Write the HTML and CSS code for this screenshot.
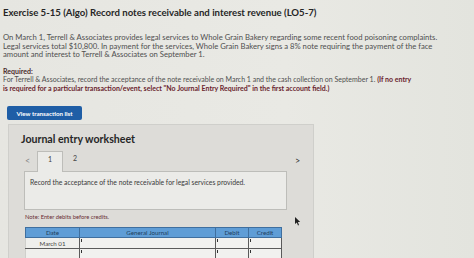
FILE: index.html
```html
<!DOCTYPE html>
<html>
<head>
    <meta charset="utf-8" />
    <title>Exercise 5-15</title>
    <link rel="stylesheet" href="styles.css">
</head>
<body>
    <div id="lap">
        <h1 id="cim">Exercise 5-15 (Algo) Record notes receivable and interest revenue (LO5-7)</h1>
        <p id="leiras">
            On March 1, Terrell &amp; Associates provides legal services to Whole Grain Bakery regarding some recent food poisoning complaints.<br>
            Legal services total $10,800. In payment for the services, Whole Grain Bakery signs a 8% note requiring the payment of the face<br>
            amount and interest to Terrell &amp; Associates on September 1.
        </p>
        <div id="feladat">
            <div class="cimke">Required:</div>
            For Terrell &amp; Associates, record the acceptance of the note receivable on March 1 and the cash collection on September 1. <b class="piros">(If no entry<br>
            is required for a particular transaction/event, select "No Journal Entry Required" in the first account field.)</b>
        </div>
        <button id="gomb" type="button">View transaction list</button>
        <div id="munkalap">
            <h2>Journal entry worksheet</h2>
            <div id="fulek">
                <span class="nyil">&lt;</span>
                <span class="ful aktiv">1</span>
                <span class="ful">2</span>
                <span class="nyil jobb">&gt;</span>
            </div>
            <div id="doboz">Record the acceptance of the note receivable for legal services provided.</div>
            <div id="megjegyzes">Note: Enter debits before credits.</div>
            <table id="tabla">
                <tr>
                    <th class="datum">Date</th>
                    <th class="konyv">General Journal</th>
                    <th class="osszeg">Debit</th>
                    <th class="osszeg">Credit</th>
                </tr>
                <tr>
                    <td class="datum">March 01</td>
                    <td class="mezo"></td>
                    <td class="mezo"></td>
                    <td class="mezo"></td>
                </tr>
                <tr>
                    <td class="datum"></td>
                    <td class="mezo"></td>
                    <td class="mezo"></td>
                    <td class="mezo"></td>
                </tr>
            </table>
            <svg id="kurzor" width="6" height="9" viewBox="0 0 6 9"><path d="M0 0 L0 7 L1.8 5.4 L3 8.4 L4 8 L2.9 5.1 L5.2 5 Z" fill="#222"/></svg>
        </div>
    </div>
</body>
</html>
```

FILE: styles.css
```css
body {
    margin: 0;
    background-color: #e4e4df;
    font-family: Lato, "Liberation Sans", sans-serif;
    color: #4f4f4f;
    overflow: hidden;
}
#lap {
    box-sizing: border-box;
    padding: 6px 0 0 3px;
    height: 258px;
    overflow: hidden;
    background: linear-gradient(90deg, #e6e6e1 0%, #e9e9e4 60%, #e3e4de 100%);
}
#cim {
    margin: 0;
    font-size: 9.6px;
    line-height: 13px;
    font-weight: bold;
    color: #262626;
}
#leiras {
    margin: 14px 0 0 0;
    font-size: 7.7px;
    line-height: 8.5px;
}
#feladat {
    margin-top: 8px;
    font-size: 7px;
    line-height: 8.5px;
}
.cimke {
    font-weight: bold;
    color: #4a2c2c;
}
.piros {
    color: #6a1f2e;
}
#gomb {
    display: block;
    margin: 14px 0 0 4px;
    width: 75px;
    height: 14px;
    padding: 0;
    border: none;
    border-radius: 2px;
    background-color: #1f5ea6;
    color: #ffffff;
    font-family: Lato, "Liberation Sans", sans-serif;
    font-size: 6.2px;
    font-weight: bold;
}
#munkalap {
    position: relative;
    margin: 4px 0 0 5px;
    width: 286px;
    height: 140px;
    padding: 8px 8px 0 10px;
    background-color: #dddcd8;
    border: 1px solid #cfcfcb;
}
#munkalap h2 {
    margin: 0 0 0 2px;
    font-size: 10.6px;
    line-height: 13px;
    color: #262626;
}
#fulek {
    display: flex;
    align-items: flex-end;
    height: 21px;
    margin-top: 4px;
    font-size: 7px;
}
.nyil {
    align-self: center;
    width: 12px;
    padding-left: 6px;
    color: #888;
    font-size: 9px;
}
.nyil.jobb {
    margin-left: auto;
    color: #333;
    padding-left: 0;
    width: 10px;
}
.ful {
    width: 24px;
    height: 20px;
    text-align: center;
    line-height: 15px;
    color: #444;
}
.ful.aktiv {
    background-color: #ebebe8;
    border: 1px solid #bdbdb9;
    border-bottom: none;
    margin-bottom: -1px;
}
#doboz {
    margin-right: 18px;
    margin-left: 5px;
    height: 31px;
    padding: 6px 5px 0;
    background-color: #ebebe8;
    border: 1px solid #bdbdb9;
    font-size: 6.8px;
    line-height: 9px;
    color: #3a3a3a;
}
#megjegyzes {
    margin: 3px 0 0 6px;
    font-size: 5.8px;
    line-height: 7px;
    color: #6a2f35;
}
#tabla {
    margin: 7px 0 0 6px;
    border-collapse: collapse;
    font-size: 6.2px;
}
#tabla th {
    height: 9px;
    padding: 0;
    background-color: #5f9dd6;
    color: #203d5c;
    font-weight: normal;
    line-height: 8px;
    border: 1px solid #3f6f9f;
}
#tabla td {
    height: 10px;
    padding: 0;
    line-height: 9px;
    border: 1px solid #5a5a5a;
}
.datum {
    width: 53px;
    text-align: center;
}
td.datum {
    background-color: #efefec;
    color: #444;
    border-left-color: #cfcfcb !important;
}
.konyv {
    width: 135px;
}
.osszeg {
    width: 32px;
}
td.mezo {
    position: relative;
    background-color: #f1f1ef;
}
td.mezo::before {
    content: "";
    position: absolute;
    left: 1px;
    top: 1px;
    width: 1px;
    height: 3px;
    background-color: #333;
}
#kurzor {
    position: absolute;
    left: 286px;
    top: 92px;
}
```
